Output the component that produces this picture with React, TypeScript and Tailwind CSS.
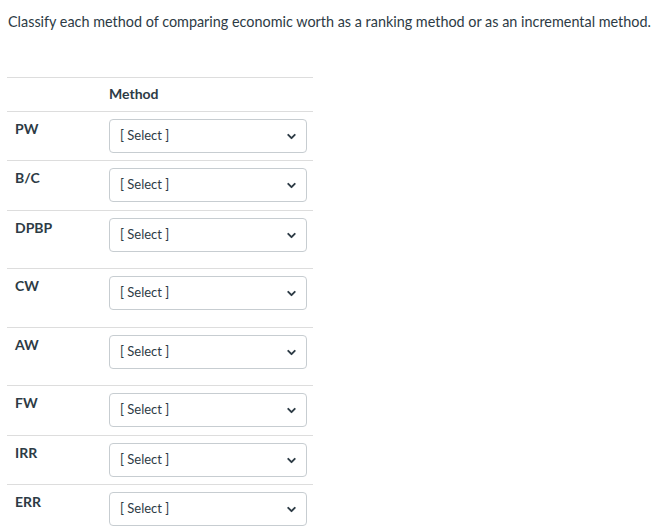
import { ChevronDown } from "lucide-react";

const rows = [
  { label: "PW", h: "h-[49px]" },
  { label: "B/C", h: "h-[50px]" },
  { label: "DPBP", h: "h-[58px]" },
  { label: "CW", h: "h-[59px]" },
  { label: "AW", h: "h-[58px]" },
  { label: "FW", h: "h-[50px]" },
  { label: "IRR", h: "h-[49px]" },
  { label: "ERR", h: "h-[49px]" },
];

function SelectBox() {
  return (
    <div className="flex items-center justify-between h-[34px] w-[198px] rounded-[4px] border border-[#c7cdd1] bg-white pl-[10px] pr-[8px]">
      <span className="text-[13px] text-[#2d3b45]">[ Select ]</span>
      <ChevronDown size={13} strokeWidth={3.5} className="text-[#2d3b45]" />
    </div>
  );
}

export default function App() {
  return (
    <div className="bg-white min-h-screen font-['Lato','Liberation_Sans',sans-serif] text-[#2d3b45]">
      <p className="pl-[8px] pt-[13px] text-[14.4px] leading-[18px]">
        Classify each method of comparing economic worth as a ranking method or as an incremental method.
      </p>

      <div className="ml-[7px] mt-[46px] w-[306px]">
        <div className="flex items-center h-[35px] pb-[3px] border-t border-b border-[#ddd]">
          <div className="w-[102px]" />
          <div className="text-[14px] font-bold">Method</div>
        </div>
        {rows.map((r) => (
          <div key={r.label} className={`flex items-start ${r.h} border-b border-[#ddd] last:border-b-0`}>
            <div className="w-[102px] pl-[8px] pt-[6px] text-[14px] font-bold">{r.label}</div>
            <div className="pt-[7px]">
              <SelectBox />
            </div>
          </div>
        ))}
      </div>
    </div>
  );
}
